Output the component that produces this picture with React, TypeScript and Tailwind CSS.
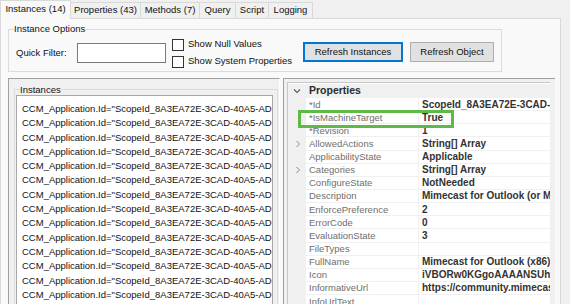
import React from "react";

const tabs = [
  { label: "Instances (14)", w: "w-[71px]", active: true },
  { label: "Properties (43)", w: "w-[70px]" },
  { label: "Methods (7)", w: "w-[59px]" },
  { label: "Query", w: "w-[36px]" },
  { label: "Script", w: "w-[33px]" },
  { label: "Logging", w: "w-[44px]" },
];

const props: { name: string; value: string; expand?: boolean }[] = [
  { name: "*Id", value: "ScopeId_8A3EA72E-3CAD-40A5-AD6C-1F5C2B6A3F1E" },
  { name: "*IsMachineTarget", value: "True" },
  { name: "*Revision", value: "1" },
  { name: "AllowedActions", value: "String[] Array", expand: true },
  { name: "ApplicabilityState", value: "Applicable" },
  { name: "Categories", value: "String[] Array", expand: true },
  { name: "ConfigureState", value: "NotNeeded" },
  { name: "Description", value: "Mimecast for Outlook (or Mimecast for Outlook)" },
  { name: "EnforcePreference", value: "2" },
  { name: "ErrorCode", value: "0" },
  { name: "EvaluationState", value: "3" },
  { name: "FileTypes", value: "" },
  { name: "FullName", value: "Mimecast for Outlook (x86)" },
  { name: "Icon", value: "iVBORw0KGgoAAAANSUhEUgAAAEAAAABA" },
  { name: "InformativeUrl", value: "https://community.mimecast.com" },
  { name: "InfoUrlText", value: "" },
];

function ChevronDown() {
  return (
    <svg width="8" height="6" viewBox="0 0 8 6" className="block">
      <path d="M1 1.5 L4 4.5 L7 1.5" fill="none" stroke="#5a5a5a" strokeWidth="1.1" />
    </svg>
  );
}
function ChevronRight() {
  return (
    <svg width="6" height="8" viewBox="0 0 6 8" className="block">
      <path d="M1.5 1 L4.5 4 L1.5 7" fill="none" stroke="#8a8a8a" strokeWidth="1" />
    </svg>
  );
}

export default function App() {
  return (
    <div className="w-[570px] h-[304px] overflow-hidden bg-[#f0f0f0] text-[9.5px] text-[#111] font-['Liberation_Sans',Arial,sans-serif] flex flex-col">
      {/* Tabs */}
      <div className="flex items-end h-[18px] relative z-10">
        {tabs.map((t) =>
          t.active ? (
            <div
              key={t.label}
              className={`${t.w} h-[19px] -mb-px bg-[#f9f9f9] border border-b-0 border-[#d9d9d9] flex items-center justify-center pb-[1px]`}
            >
              {t.label}
            </div>
          ) : (
            <div
              key={t.label}
              className={`${t.w} h-[16px] bg-[#f0f0f0] border-t border-r border-[#d9d9d9] flex items-center justify-center`}
            >
              {t.label}
            </div>
          )
        )}
      </div>

      {/* Tab panel */}
      <div className="w-[561px] flex-1 border border-[#d9d9d9] bg-[#f9f9f9] pl-[7px] pt-[4px] flex flex-col">
        <fieldset className="w-[494px] h-[49px] border border-[#dcdcdc] px-0 pb-0 pt-0 m-0">
          <legend className="ml-[5px] px-0 leading-[12px]">Instance Options</legend>
          <div className="flex items-center h-[36px]">
            <span className="ml-[7px] w-[61px]">Quick Filter:</span>
            <div className="w-[89px] h-[20px] border border-[#7a7a7a] bg-white" />
            <div className="ml-[6px] w-[131px] flex flex-col gap-[1px]">
              <div className="flex items-center h-[16px]">
                <div className="w-[12px] h-[12px] border border-[#333] bg-white" />
                <span className="ml-[4px] whitespace-nowrap">Show Null Values</span>
              </div>
              <div className="flex items-center h-[16px]">
                <div className="w-[12px] h-[12px] border border-[#333] bg-white" />
                <span className="ml-[4px] whitespace-nowrap">Show System Properties</span>
              </div>
            </div>
            <div className="w-[100px] h-[20px] -mt-[2px] border-2 border-[#0078d7] bg-[#e1e1e1] flex items-center justify-center">
              Refresh Instances
            </div>
            <div className="ml-[7px] w-[84px] h-[20px] -mt-[2px] border border-[#adadad] bg-[#e1e1e1] flex items-center justify-center">
              Refresh Object
            </div>
          </div>
        </fieldset>

        {/* Lower split area */}
        <div className="mt-[6px] flex-1 flex gap-[3px]">
          {/* Left panel */}
          <div className="w-[272px] h-[240px] border-t border-l border-[#a0a0a0] border-r border-b border-r-white border-b-white bg-[#f0f0f0] pt-[5px] pl-[5px] pr-[1px]">
            <fieldset className="h-[240px] border border-[#dcdcdc] m-0 p-0">
              <legend className="ml-[5px] px-0 leading-[11px]">Instances</legend>
              <div className="ml-[1px] w-[257px] h-[230px] border border-[#a8a8a8] bg-white pt-[6px] pl-[5px] overflow-hidden">
                {Array.from({ length: 15 }).map((_, i) => (
                  <div key={i} className="h-[14.3px] leading-[14.3px] whitespace-nowrap overflow-hidden">
                    CCM_Application.Id="ScopeId_8A3EA72E-3CAD-40A5-AD6C-1F5C2B6A3F1E/Application_1"
                  </div>
                ))}
              </div>
            </fieldset>
          </div>

          {/* Right panel */}
          <div className="w-[272px] h-[240px] border-t border-l border-[#a0a0a0] bg-[#f0f0f0] pt-[3px] pl-[3px] pr-[5px]">
            <div className="relative border-t border-l border-[#c8c8c8] bg-white h-[240px] overflow-hidden">
              {/* category header */}
              <div className="flex items-center h-[14px] mt-[1px] bg-[#f0f0f0]">
                <div className="w-[18px] flex justify-center">
                  <ChevronDown />
                </div>
                <span className="pl-[3px] font-bold text-[10.5px] text-[#2b2b2b]">Properties</span>
              </div>
              {props.map((p) => (
                <div key={p.name} className="flex h-[13.15px] leading-[12px]">
                  <div className="w-[18px] bg-[#f0f0f0] flex items-center justify-center pl-[2px]">
                    {p.expand ? <ChevronRight /> : null}
                  </div>
                  <div className="w-[113px] pl-[3px] pt-[0.5px] text-[#6e6e6e] border-b border-r border-[#f0f0f0] whitespace-nowrap overflow-hidden">
                    {p.name}
                  </div>
                  <div className="flex-1 pl-[3px] pt-[0.5px] font-bold text-[10px] text-[#333] border-b border-[#f0f0f0] whitespace-nowrap overflow-hidden">
                    {p.value}
                  </div>
                </div>
              ))}
              {/* highlight box */}
              <div className="absolute left-[10px] top-[27px] w-[156px] h-[18px] border-[3px] border-[#5fb946]" />
            </div>
          </div>
        </div>
      </div>
    </div>
  );
}
